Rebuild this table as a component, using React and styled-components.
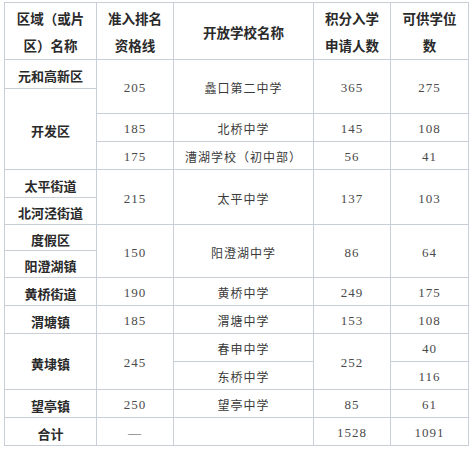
import React from 'react';
import styled, { createGlobalStyle } from 'styled-components';

const GlobalStyle = createGlobalStyle`
  html, body {
    margin: 0;
    padding: 0;
    background: #ffffff;
  }
`;

const Page = styled.div`
  padding: 2px 6px 0 4px;
  background: #ffffff;
  width: 474px;
  height: 450px;
  box-sizing: border-box;
`;

const Table = styled.table`
  width: 464px;
  border-collapse: collapse;
  table-layout: fixed;
  border: 1px solid #c6ccd5;
`;

const Col = styled.col`
  width: ${(p) => p.$w}px;
`;

const Row = styled.tr`
  height: ${(p) => p.$h}px;
`;

const Cell = styled.td`
  border: 1px solid #c9cfd8;
  padding: 0;
  text-align: center;
  vertical-align: middle;
  box-sizing: border-box;
`;

const HeadCell = styled(Cell)`
  font-family: "Noto Sans CJK SC", sans-serif;
  font-weight: 700;
  font-size: 13.5px;
  line-height: 27px;
  color: #2a2a2a;
  padding-top: 2px;
`;

const RegionCell = styled(Cell)`
  font-family: "Noto Sans CJK SC", sans-serif;
  font-weight: 700;
  font-size: 13px;
  color: #2a2a2a;
  padding-top: 3px;
`;

const NumCell = styled(Cell)`
  font-family: "Liberation Serif", serif;
  font-size: 13px;
  letter-spacing: 1px;
  color: #4a4a4a;
  padding-top: 3px;
`;

const SchoolCell = styled(Cell)`
  font-family: "Noto Sans CJK SC", sans-serif;
  font-size: 12px;
  letter-spacing: 1px;
  color: #3a3a3a;
  padding-top: 2px;
`;

const cellFor = { r: RegionCell, n: NumCell, s: SchoolCell };

const widths = [92, 77, 140, 77, 78];

// each row: height, then cells [kind, text, rowSpan]
const rows = [
  [29, [['r', '元和高新区'], ['n', '205', 2], ['s', '蠡口第二中学', 2], ['n', '365', 2], ['n', '275', 2]]],
  [25, [['r', '开发区', 3]]],
  [28, [['n', '185'], ['s', '北桥中学'], ['n', '145'], ['n', '108']]],
  [28, [['n', '175'], ['s', '漕湖学校（初中部）'], ['n', '56'], ['n', '41']]],
  [28, [['r', '太平街道'], ['n', '215', 2], ['s', '太平中学', 2], ['n', '137', 2], ['n', '103', 2]]],
  [27, [['r', '北河泾街道']]],
  [26, [['r', '度假区'], ['n', '150', 2], ['s', '阳澄湖中学', 2], ['n', '86', 2], ['n', '64', 2]]],
  [27, [['r', '阳澄湖镇']]],
  [28, [['r', '黄桥街道'], ['n', '190'], ['s', '黄桥中学'], ['n', '249'], ['n', '175']]],
  [28, [['r', '渭塘镇'], ['n', '185'], ['s', '渭塘中学'], ['n', '153'], ['n', '108']]],
  [28, [['r', '黄埭镇', 2], ['n', '245', 2], ['s', '春申中学'], ['n', '252', 2], ['n', '40']]],
  [28, [['s', '东桥中学'], ['n', '116']]],
  [28, [['r', '望亭镇'], ['n', '250'], ['s', '望亭中学'], ['n', '85'], ['n', '61']]],
  [28, [['r', '合计'], ['n', '—'], ['s', ''], ['n', '1528'], ['n', '1091']]],
];

export default function App() {
  return (
    <Page>
      <GlobalStyle />
      <Table>
        <colgroup>
          {widths.map((w, i) => (
            <Col key={i} $w={w} />
          ))}
        </colgroup>
        <tbody>
          <Row $h={57}>
            <HeadCell>区域（或片<br />区）名称</HeadCell>
            <HeadCell>准入排名<br />资格线</HeadCell>
            <HeadCell>开放学校名称</HeadCell>
            <HeadCell>积分入学<br />申请人数</HeadCell>
            <HeadCell>可供学位<br />数</HeadCell>
          </Row>
          {rows.map(([h, cells], i) => (
            <Row key={i} $h={h}>
              {cells.map(([kind, text, span], j) => {
                const C = cellFor[kind];
                return (
                  <C key={j} rowSpan={span || 1}>
                    {text}
                  </C>
                );
              })}
            </Row>
          ))}
        </tbody>
      </Table>
    </Page>
  );
}
